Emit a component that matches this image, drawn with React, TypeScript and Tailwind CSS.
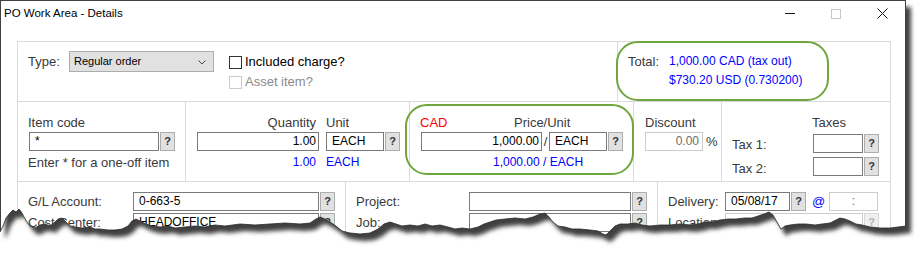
import React from "react";

type InputProps = { w: string; value?: string; right?: boolean; disabled?: boolean; center?: boolean };

function Input({ w, value = "", right = false, disabled = false, center = false }: InputProps) {
  return (
    <div
      className={`h-[19px] shrink-0 ${w} border bg-white text-[12px] leading-[17px] whitespace-nowrap overflow-hidden ${
        disabled ? "border-[#cccccc] text-[#6d6d6d]" : "border-[#7a7a7a] text-black"
      } ${right ? "pr-[2px] text-right" : center ? "text-center" : "pl-[5px]"}`}
    >
      {value}
    </div>
  );
}

function Q({ disabled = false }: { disabled?: boolean }) {
  return (
    <div
      className={`ml-[1px] flex h-[19px] w-[15px] shrink-0 items-center justify-center border text-[11px] font-bold leading-none ${
        disabled ? "border-[#d8d8d8] bg-[#efefef] text-[#b4b4b4]" : "border-[#adadad] bg-[#e1e1e1] text-[#333333]"
      }`}
    >
      ?
    </div>
  );
}

const edge: [number, number][] = [
  [0, 232], [3, 226], [6, 218], [10, 213], [13, 210], [16, 212], [19, 209], [22, 213], [24, 217], [27, 222],
  [30, 226], [35, 228], [40, 225], [45, 224], [50, 226], [55, 222], [58, 219], [62, 218], [66, 222], [70, 226],
  [75, 227], [82, 228], [90, 227], [95, 229], [100, 229], [108, 230], [115, 230], [122, 229], [128, 226], [132, 221],
  [136, 219], [140, 221], [146, 224], [152, 226], [160, 227], [168, 226], [175, 228], [185, 227], [195, 226], [205, 227],
  [215, 225], [225, 226], [240, 224], [255, 225], [270, 224], [285, 223], [300, 224], [310, 223], [316, 219], [320, 217],
  [325, 219], [330, 222], [336, 226], [342, 231], [350, 233], [360, 234], [370, 233], [378, 229], [384, 224], [390, 222],
  [396, 224], [402, 226], [410, 225], [418, 226], [425, 224], [432, 226], [440, 225], [448, 227], [455, 229], [462, 228],
  [470, 229], [478, 227], [484, 224], [490, 222], [496, 220], [505, 219], [515, 218], [525, 219], [533, 217], [540, 214],
  [545, 213], [549, 217], [553, 222], [558, 226], [565, 227], [572, 229], [580, 229], [590, 230], [598, 231], [603, 234],
  [606, 235], [610, 231], [615, 226], [620, 224], [628, 224], [635, 223], [642, 225], [650, 226], [660, 225], [670, 225],
  [680, 224], [690, 225], [698, 224], [705, 222], [712, 222], [720, 220], [728, 219], [736, 219], [745, 218], [752, 218],
  [758, 216], [764, 214], [769, 212], [773, 215], [777, 222], [781, 229], [785, 226], [790, 225], [798, 224], [806, 224],
  [815, 225], [822, 224], [830, 223], [836, 220], [840, 218], [845, 219], [850, 221], [856, 224], [862, 225], [870, 227],
  [880, 228], [890, 228], [898, 227], [906, 226],
];

const paper =
  "M0,0 L906,0 " +
  edge
    .slice()
    .reverse()
    .map(([x, y]) => `L${x},${y}`)
    .join(" ") +
  " Z";
const outside = "M0,0 L921,0 L921,258 L0,258 Z " + paper;

function TornEdge() {
  return (
    <svg className="pointer-events-none absolute left-0 top-0" width={921} height={258}>
      <defs>
        <clipPath id="outsideClip">
          <path d={outside} clipRule="evenodd" />
        </clipPath>
        <filter id="shBlur" x="-5%" y="-5%" width="110%" height="115%">
          <feGaussianBlur stdDeviation="2" />
        </filter>
      </defs>
      <path d={outside} fillRule="evenodd" fill="#ffffff" />
      <g clipPath="url(#outsideClip)">
        <path d={paper} transform="translate(5,7)" fill="#404040" filter="url(#shBlur)" />
      </g>
      <polyline points={edge.map((p) => p.join(",")).join(" ")} fill="none" stroke="#2a2a2a" strokeWidth={0.8} />
    </svg>
  );
}

export default function App() {
  const label = "text-[13px] text-[#3a3a3a]";
  return (
    <div className="relative h-[258px] w-[921px] overflow-hidden bg-white font-['Liberation_Sans',Arial,sans-serif]">
      <div className="h-[258px] w-[906px] border-l border-r border-t border-[#404040] bg-white">
        {/* Title bar */}
        <div className="flex h-[25px] items-center">
          <div className="pl-[3px] text-[11.5px] text-black">PO Work Area - Details</div>
          <div className="ml-auto flex h-full">
            <div className="flex w-[46px] items-center justify-center">
              <div className="h-[1px] w-[10px] bg-[#111111]" />
            </div>
            <div className="flex w-[46px] items-center justify-center">
              <div className="h-[10px] w-[10px] border border-[#c8c8c8]" />
            </div>
            <div className="flex w-[46px] items-center justify-center">
              <svg width="11" height="11" viewBox="0 0 11 11">
                <path d="M0.5 0.5 L10.5 10.5 M10.5 0.5 L0.5 10.5" stroke="#111" strokeWidth="1" />
              </svg>
            </div>
          </div>
        </div>

        {/* Body */}
        <div className="pl-[16px] pt-[15px]">
          <div className="h-[220px] w-[874px] border border-[#dadada]">
            {/* Row 1 */}
            <div className="flex h-[60px] border-b border-[#dadada]">
              <div className="flex w-[600px] items-start border-r border-[#dadada] pl-[10px] pt-[9px]">
                <div className={`w-[41px] leading-[21px] ${label}`}>Type:</div>
                <div className="relative flex h-[21px] w-[145px] items-center border border-[#adadad] bg-[#e1e1e1] pl-[4px] text-[11px] text-black">
                  Regular order
                  <svg className="absolute right-[7px] top-[8px]" width="8" height="5" viewBox="0 0 8 5">
                    <path d="M0.5 0.5 L4 4 L7.5 0.5" fill="none" stroke="#444" strokeWidth="1" />
                  </svg>
                </div>
                <div className="ml-[15px] mt-[1px] flex flex-col">
                  <div className="flex h-[20px] items-center">
                    <div className="h-[13px] w-[13px] border border-[#333333] bg-white" />
                    <span className="ml-[3px] text-[13px] text-black">Included charge?</span>
                  </div>
                  <div className="flex h-[20px] items-center">
                    <div className="h-[13px] w-[13px] border border-[#cccccc] bg-white" />
                    <span className="ml-[3px] text-[13px] text-[#8a8a8a]">Asset item?</span>
                  </div>
                </div>
              </div>
              <div className="flex flex-1 pl-[10px] pt-[10px]">
                <div className={`w-[41px] leading-[19px] ${label}`}>Total:</div>
                <div className="text-[12px] leading-[19px] text-[#0000ff]">
                  <div>1,000.00 CAD (tax out)</div>
                  <div>$730.20 USD (0.730200)</div>
                </div>
              </div>
            </div>

            {/* Row 2 */}
            <div className="flex h-[80px] border-b border-[#dadada]">
              <div className="w-[168px] border-r border-[#dadada] pl-[10px] pt-[11px]">
                <div className={`leading-[19px] ${label}`}>Item code</div>
                <div className="ml-[1px] flex">
                  <Input w="w-[130px]" value="*" />
                  <Q />
                </div>
                <div className={`mt-[2px] leading-[19px] ${label}`}>Enter * for a one-off item</div>
              </div>
              <div className="flex w-[224px] border-r border-[#dadada] pl-[11px] pt-[11px]">
                <div className="w-[122px]">
                  <div className={`pr-[3px] text-right leading-[19px] ${label}`}>Quantity</div>
                  <Input w="w-[122px]" value="1.00" right />
                  <div className="mt-[2px] pr-[3px] text-right text-[12px] leading-[19px] text-[#0000ff]">1.00</div>
                </div>
                <div className="ml-[7px]">
                  <div className={`leading-[19px] ${label}`}>Unit</div>
                  <div className="flex">
                    <Input w="w-[58px]" value="EACH" />
                    <Q />
                  </div>
                  <div className="mt-[2px] text-[12px] leading-[19px] text-[#0000ff]">EACH</div>
                </div>
              </div>
              <div className="w-[224px] border-r border-[#dadada] pl-[11px] pt-[11px]">
                <div className="flex leading-[19px]">
                  <div className="ml-[-1px] w-[94px] text-[13px] text-[#ff0000]">CAD</div>
                  <div className={label}>Price/Unit</div>
                </div>
                <div className="flex">
                  <Input w="w-[121px]" value="1,000.00" right />
                  <div className="w-[7px] text-center text-[13px] leading-[19px] text-[#3a3a3a]">/</div>
                  <Input w="w-[58px]" value="EACH" />
                  <Q />
                </div>
                <div className="ml-[72px] mt-[2px] text-[12px] leading-[19px] text-[#0000ff]">1,000.00 / EACH</div>
              </div>
              <div className="w-[88px] border-r border-[#dadada] pl-[11px] pt-[11px]">
                <div className={`leading-[19px] ${label}`}>Discount</div>
                <div className="flex items-center">
                  <div className="h-[19px] w-[58px] shrink-0 border border-[#cccccc] bg-white pr-[3px] text-right text-[12px] leading-[17px] text-[#6d6d6d]">
                    0.00
                  </div>
                  <span className="ml-[3px] text-[13px] text-[#3a3a3a]">%</span>
                </div>
              </div>
              <div className="flex-1 pl-[10px] pt-[11px]">
                <div className={`ml-[80px] leading-[19px] ${label}`}>Taxes</div>
                <div className="flex items-center">
                  <div className={`w-[81px] pt-[3px] ${label}`}>Tax 1:</div>
                  <Input w="w-[50px]" />
                  <Q />
                </div>
                <div className="mt-[1px] flex items-center">
                  <div className={`w-[81px] pt-[3px] ${label}`}>Tax 2:</div>
                  <Input w="w-[50px]" />
                  <Q />
                </div>
              </div>
            </div>

            {/* Row 3 */}
            <div className="flex h-[78px]">
              <div className="w-[328px] border-r border-[#dadada] pl-[10px] pt-[10px]">
                <div className="flex items-center">
                  <div className={`w-[105px] ${label}`}>G/L Account:</div>
                  <Input w="w-[186px]" value="0-663-5" />
                  <Q />
                </div>
                <div className="mt-[1px] flex items-center">
                  <div className={`w-[105px] ${label}`}>Cost Center:</div>
                  <Input w="w-[186px]" value="HEADOFFICE" />
                  <Q />
                </div>
              </div>
              <div className="w-[312px] border-r border-[#dadada] pl-[10px] pt-[10px]">
                <div className="flex items-center">
                  <div className={`w-[113px] ${label}`}>Project:</div>
                  <Input w="w-[162px]" />
                  <Q />
                </div>
                <div className="mt-[1px] flex items-center">
                  <div className={`w-[113px] ${label}`}>Job:</div>
                  <Input w="w-[162px]" />
                  <Q />
                </div>
              </div>
              <div className="flex-1 pl-[10px] pt-[10px]">
                <div className="flex items-center">
                  <div className={`w-[57px] ${label}`}>Delivery:</div>
                  <Input w="w-[65px]" value="05/08/17" />
                  <Q />
                  <span className="ml-[6px] w-[17px] text-[13px] text-[#0000ff]">@</span>
                  <Input w="w-[49px]" value=":" disabled center />
                </div>
                <div className="mt-[1px] flex items-center">
                  <div className={`w-[57px] ${label}`}>Location:</div>
                  <Input w="w-[138px]" disabled />
                  <Q disabled />
                </div>
              </div>
            </div>
          </div>
        </div>
      </div>

      {/* Annotations */}
      <div className="pointer-events-none absolute left-[616px] top-[41px] h-[60px] w-[213px] rounded-[22px] border-2 border-[#6fa63d]" />
      <div className="pointer-events-none absolute left-[405px] top-[104px] h-[71px] w-[229px] rounded-[22px] border-2 border-[#6fa63d]" />

      <TornEdge />
    </div>
  );
}
